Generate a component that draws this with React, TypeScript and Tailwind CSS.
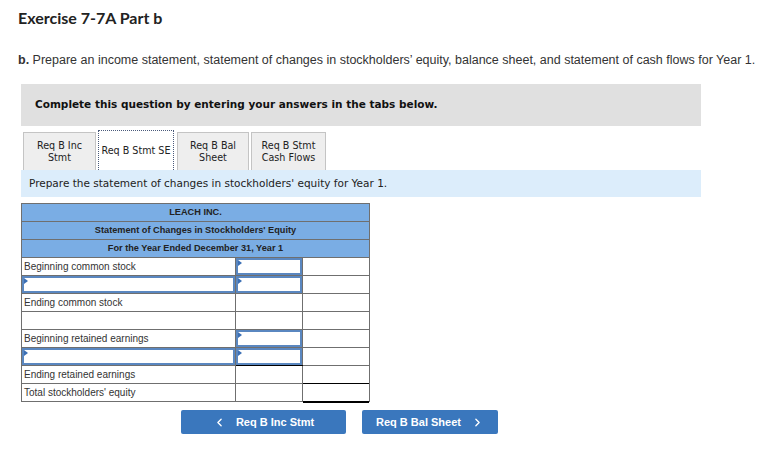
import { ChevronLeft, ChevronRight } from "lucide-react";

function InputBox() {
  return (
    <div className="relative box-border h-full w-full border-2 border-[#5a87c0] bg-white">
      <span className="absolute left-0 top-0 h-0 w-0 border-l-[4px] border-t-[3px] border-b-[3px] border-l-[#3b6fb5] border-t-transparent border-b-transparent" />
    </div>
  );
}

function Row({
  label,
  labelInput,
  midInput,
  midClass = "",
  rightClass = "",
}: {
  label?: string;
  labelInput?: boolean;
  midInput?: boolean;
  midClass?: string;
  rightClass?: string;
}) {
  return (
    <div className="flex h-[18px] border-b border-[#6f6f6f]">
      <div className="flex w-[214px] items-center border-r border-[#6f6f6f]">
        {labelInput ? <InputBox /> : <span className="pl-[2px] text-[10px] leading-[12px] text-[#333]">{label}</span>}
      </div>
      <div className={`w-[67px] border-r border-[#6f6f6f] ${midClass}`}>{midInput && <InputBox />}</div>
      <div className={`flex-1 ${rightClass}`} />
    </div>
  );
}

function HeadRow({ children }: { children: React.ReactNode }) {
  return (
    <div className="flex h-[18px] items-center justify-center border-b border-[#6f6f6f] bg-[#7aade4] text-[9.2px] font-bold text-[#222]">
      {children}
    </div>
  );
}

export default function App() {
  return (
    <div className="min-h-[469px] bg-white pl-[18px] pt-[8px] text-[#222]" style={{ fontFamily: "'Liberation Sans', Arial, sans-serif" }}>
      <h1 className="text-[16px] font-bold leading-[20px] text-[#222]" style={{ fontFamily: "Lato, 'Liberation Sans', sans-serif" }}>
        Exercise 7-7A Part b
      </h1>
      <p className="mt-[25px] text-[12.5px] leading-[14px] text-[#333]">
        <b>b.</b> Prepare an income statement, statement of changes in stockholders’ equity, balance sheet, and statement of cash flows for Year 1.
      </p>

      <div className="ml-[3px] mt-[17px] w-[680px]" style={{ fontFamily: "Verdana, 'DejaVu Sans', sans-serif" }}>
        <div className="flex h-[42px] items-center bg-[#e0e0e0] pl-[14px] text-[10.5px] font-bold text-[#111]">
          Complete this question by entering your answers in the tabs below.
        </div>

        <div className="mt-[4px] flex items-end pl-[2px] text-[9.6px] leading-[12px] text-[#222]">
          <div className="flex h-[38px] w-[73px] items-center justify-center border border-b-0 border-[#c4c4c4] bg-[#eeeeee] text-center">
            Req B Inc<br />Stmt
          </div>
          <div className="ml-[2px] flex h-[40px] w-[76px] items-center justify-center border border-b-0 border-dotted border-[#4a5a7a] bg-white text-center">
            Req B Stmt SE
          </div>
          <div className="ml-[3px] flex h-[38px] w-[72px] items-center justify-center border border-b-0 border-[#c4c4c4] bg-[#eeeeee] text-center">
            Req B Bal<br />Sheet
          </div>
          <div className="ml-[2px] flex h-[38px] w-[75px] items-center justify-center border border-b-0 border-[#c4c4c4] bg-[#eeeeee] text-center">
            Req B Stmt<br />Cash Flows
          </div>
        </div>

        <div className="flex h-[27px] items-center bg-[#dcedfb] pl-[8px] text-[10.5px] text-[#222]">
          Prepare the statement of changes in stockholders' equity for Year 1.
        </div>
      </div>

      <div className="ml-[3px] mt-[6px] w-[349px] border-l border-r border-t border-[#6f6f6f]">
        <HeadRow>LEACH INC.</HeadRow>
        <HeadRow>Statement of Changes in Stockholders' Equity</HeadRow>
        <HeadRow>For the Year Ended December 31, Year 1</HeadRow>
        <Row label="Beginning common stock" midInput />
        <Row labelInput midInput />
        <Row label="Ending common stock" />
        <Row />
        <Row label="Beginning retained earnings" midInput />
        <Row labelInput midInput midClass="shadow-[0_1px_0_#000]" />
        <Row label="Ending retained earnings" rightClass="shadow-[0_1px_0_#000]" />
        <Row label="Total stockholders' equity" rightClass="shadow-[0_2px_0_#000]" />
      </div>

      <div className="ml-[163px] mt-[8px] flex gap-[16px] text-[11px] font-bold text-white">
        <button className="flex h-[24px] w-[165px] items-center justify-center gap-[10px] rounded-[2px] bg-[#3a77bd]">
          <ChevronLeft size={13} strokeWidth={2.5} />
          Req B Inc Stmt
        </button>
        <button className="flex h-[24px] w-[136px] items-center justify-center gap-[10px] rounded-[2px] bg-[#3a77bd]">
          Req B Bal Sheet
          <ChevronRight size={13} strokeWidth={2.5} />
        </button>
      </div>
    </div>
  );
}
